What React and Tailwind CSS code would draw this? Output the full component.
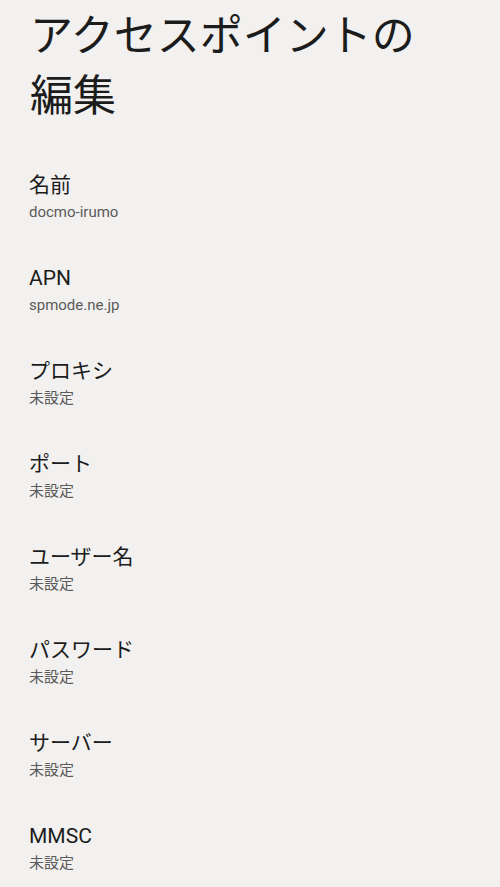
const rows = [
  { label: '名前', value: 'docmo-irumo' },
  { label: 'APN', value: 'spmode.ne.jp' },
  { label: 'プロキシ', value: '未設定' },
  { label: 'ポート', value: '未設定' },
  { label: 'ユーザー名', value: '未設定' },
  { label: 'パスワード', value: '未設定' },
  { label: 'サーバー', value: '未設定' },
  { label: 'MMSC', value: '未設定' },
];

export default function App() {
  return (
    <div
      className="min-h-screen w-full bg-[#f2f1ef] overflow-hidden"
      style={{ fontFamily: 'Roboto, "Noto Sans CJK JP", sans-serif' }}
    >
      {/* Header */}
      <h1 className="pl-[30px] pr-16 pt-1.5 text-[43px] leading-[60px] font-normal text-[#1c1c1c]">
        アクセスポイントの編集
      </h1>

      {/* Settings list */}
      <div className="mt-[25px]">
        {rows.map(({ label, value }) => (
          <div key={label} className="pl-[29px] pr-6 pt-5 pb-[19px]">
            <div className="text-[21px] leading-7 text-[#1c1c1c]">{label}</div>
            <div className="text-[15px] leading-[26px] text-[#5a5a5a]">{value}</div>
          </div>
        ))}
      </div>
    </div>
  );
}
